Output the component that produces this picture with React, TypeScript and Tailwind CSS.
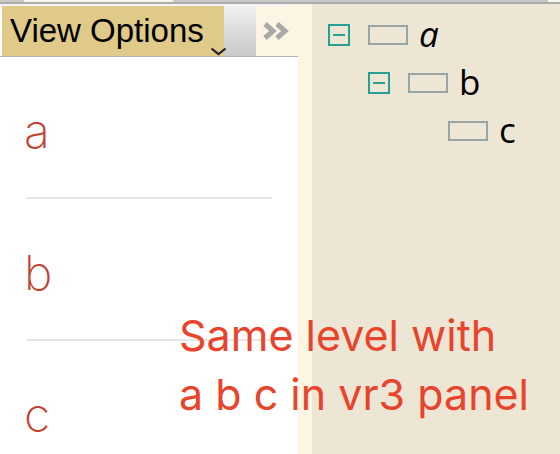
import React from 'react';

const TreeRow: React.FC<{ indent: number; label: string; toggle?: boolean; italic?: boolean }> = ({
  indent,
  label,
  toggle,
  italic,
}) => (
  <div className="flex h-[48px] items-center" style={{ paddingLeft: indent }}>
    <div className="flex w-[40px] items-center">
      {toggle && (
        <div className="flex h-[22px] w-[22px] items-center justify-center border-2 border-[#27a093]">
          <div className="h-[2px] w-[12px] bg-[#27a093]" />
        </div>
      )}
    </div>
    <div className="h-[20px] w-[40px] border-2 border-[#97a6a4]" />
    <span
      className={`mb-[4px] ml-[11px] text-[35px] leading-none text-black ${italic ? 'italic' : ''}`}
      style={{ fontFamily: '"Open Sans", sans-serif' }}
    >
      {label}
    </span>
  </div>
);

const ListItem: React.FC<{ label: string; last?: boolean }> = ({ label, last }) => (
  <div className="shrink-0">
    <div className="h-[140px] pl-[24px] pt-[50px]">
      <span
        className="text-[48px] font-extralight leading-none text-[#c4412d]"
        style={{ fontFamily: 'Inter, sans-serif' }}
      >
        {label}
      </span>
    </div>
    {!last && <div className="mx-[26px] h-[2px] bg-[#e6e6e6]" />}
  </div>
);

export default function App() {
  return (
    <div className="relative h-[454px] w-[560px] overflow-hidden bg-white">
      {/* window top edge */}
      <div className="flex h-[2px]">
        <div className="w-[24px] bg-[#c8c8c8]" />
        <div className="w-[149px] bg-[#fbf6ea]" />
        <div className="flex-1 bg-[#c8c8c8]" />
        <div className="w-[12px] bg-[#fbf6ea]" />
      </div>
      <div className="h-[2px] bg-[#acacac]" />

      <div className="flex h-[450px]">
        {/* left panel */}
        <div className="flex w-[298px] shrink-0 flex-col overflow-hidden bg-white">
          <div className="h-[2px] shrink-0 bg-[#f4f4f4]" />
          <div className="flex h-[50px] shrink-0 pl-[2px]">
            <div className="relative flex w-[222px] items-center bg-[#dfca8a] pl-[8px]">
              <span className="text-[33px] text-black" style={{ fontFamily: '"Liberation Sans", Arial, sans-serif' }}>
                View Options
              </span>
              <svg className="absolute left-[208px] top-[41px]" width="17" height="9" viewBox="0 0 17 9">
                <polyline points="1.5,1.5 8.5,7 15.5,1.5" fill="none" stroke="#222" strokeWidth="2.2" />
              </svg>
            </div>
            <div className="w-[32px] bg-gradient-to-b from-[#f0f0f0] to-[#c9c9c9]" />
            <div className="flex flex-1 items-center bg-[#fcf5e3] pl-[6px]">
              <svg width="28" height="20" viewBox="0 0 28 20">
                <polyline points="3,3 11,10 3,17" fill="none" stroke="#a8a8a8" strokeWidth="5" />
                <polyline points="15,3 23,10 15,17" fill="none" stroke="#a8a8a8" strokeWidth="5" />
              </svg>
            </div>
          </div>
          <div className="h-[1px] shrink-0 bg-[#b3b3b3]" />
          <ListItem label="a" />
          <ListItem label="b" />
          <ListItem label="c" last />
        </div>

        {/* splitter */}
        <div className="w-[14px] shrink-0 bg-[#fcf5e3]" />

        {/* vr3 panel */}
        <div className="flex-1 bg-[#eee6d4] pl-[16px] pt-[7px]">
          <TreeRow indent={0} label="a" toggle italic />
          <TreeRow indent={40} label="b" toggle />
          <TreeRow indent={80} label="c" />
        </div>
      </div>

      {/* annotation */}
      <div
        className="absolute left-[179px] top-[306px] text-[43px] leading-[59px] text-[#e8442b]"
        style={{ fontFamily: 'Inter, sans-serif' }}
      >
        Same level with
        <br />
        a b c in vr3 panel
      </div>
    </div>
  );
}
